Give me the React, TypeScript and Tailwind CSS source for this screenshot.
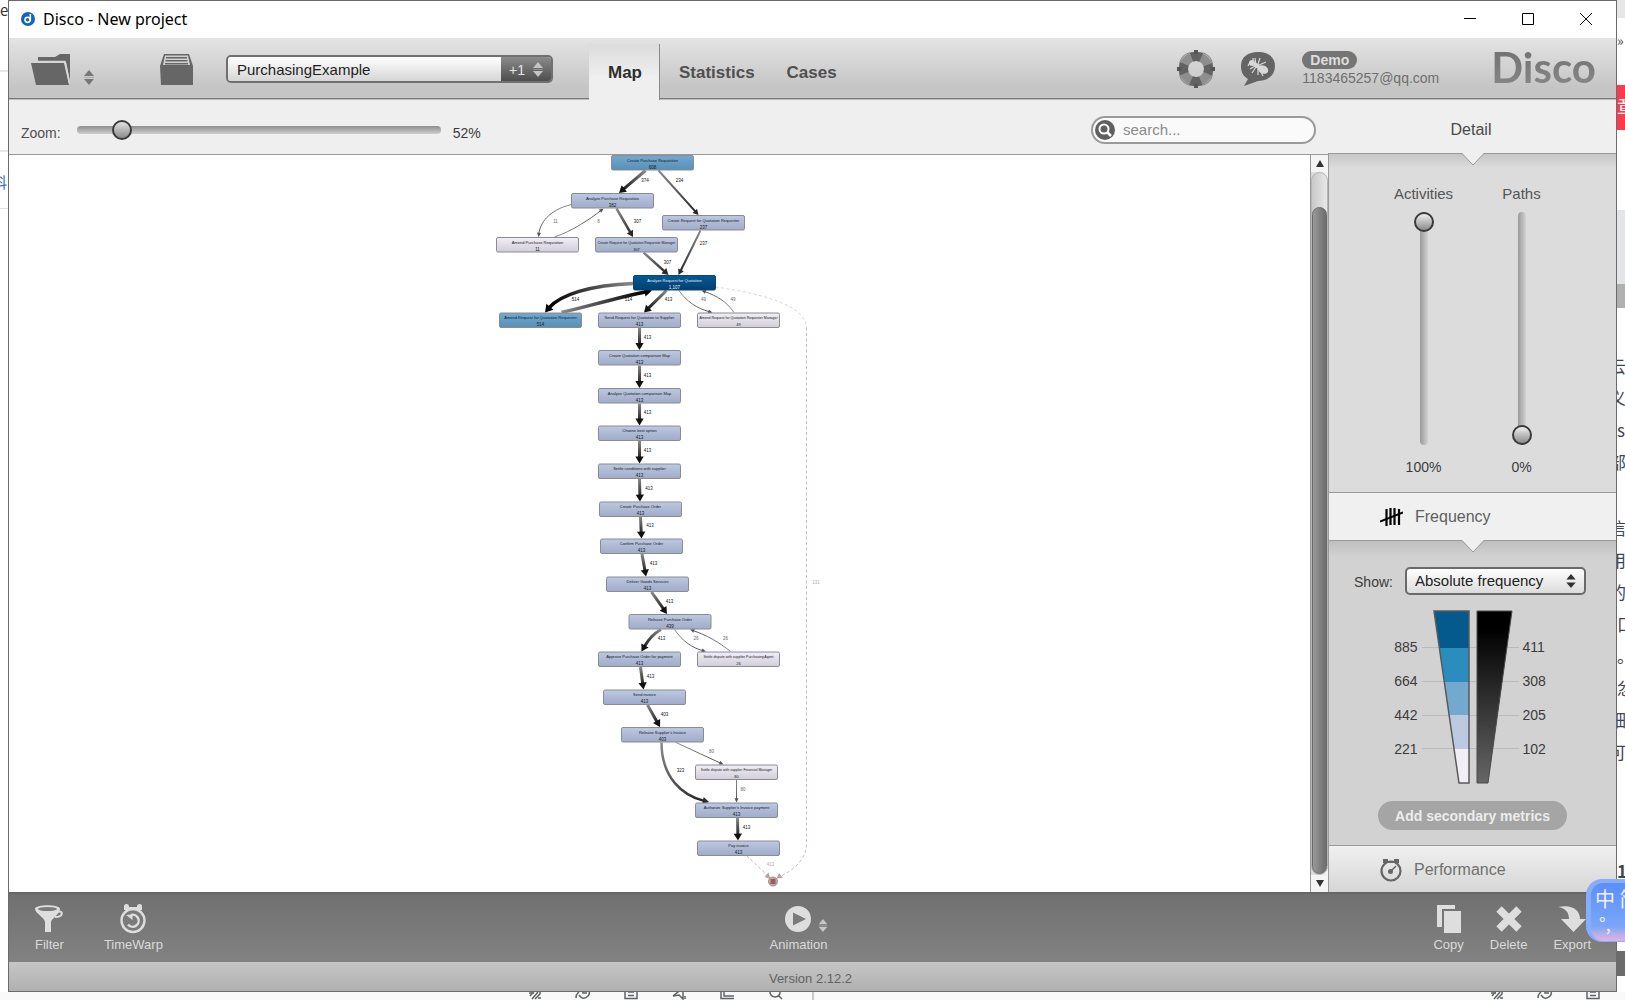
import { useState } from "react";
import type { ReactNode } from "react";

/* ---------- process map data (units: half a pixel at 52% zoom) ---------- */

type Tone = "dark" | "blue" | "mid" | "pale";
type MapNode = { x: number; y: number; name: string; count: string; tone: Tone; small?: boolean };
type MapEdge = { p: number[]; w: number; label?: string; lx?: number; ly?: number; from?: string; to?: string };

const nodes: MapNode[] = [
  { x: 1305, y: 310, name: "Create Purchase Requisition", count: "608", tone: "blue" },
  { x: 1225, y: 386, name: "Analyze Purchase Requisition", count: "382", tone: "mid" },
  { x: 1407, y: 430, name: "Create Request for Quotation Requester", count: "237", tone: "mid" },
  { x: 1075, y: 474, name: "Amend Purchase Requisition", count: "11", tone: "pale" },
  { x: 1273, y: 474, name: "Create Request for Quotation Requester Manager", count: "307", tone: "mid", small: true },
  { x: 1349, y: 550, name: "Analyze Request for Quotation", count: "1,107", tone: "dark" },
  { x: 1081, y: 625, name: "Amend Request for Quotation Requester", count: "514", tone: "blue" },
  { x: 1279, y: 625, name: "Send Request for Quotation to Supplier", count: "413", tone: "mid" },
  { x: 1477, y: 625, name: "Amend Request for Quotation Requester Manager", count: "49", tone: "pale", small: true },
  { x: 1279, y: 700, name: "Create Quotation comparison Map", count: "413", tone: "mid" },
  { x: 1279, y: 776, name: "Analyze Quotation comparison Map", count: "413", tone: "mid" },
  { x: 1279, y: 851, name: "Choose best option", count: "413", tone: "mid" },
  { x: 1279, y: 927, name: "Settle conditions with supplier", count: "413", tone: "mid" },
  { x: 1281, y: 1003, name: "Create Purchase Order", count: "413", tone: "mid" },
  { x: 1283, y: 1077, name: "Confirm Purchase Order", count: "413", tone: "mid" },
  { x: 1295, y: 1153, name: "Deliver Goods Services", count: "413", tone: "mid" },
  { x: 1340, y: 1228, name: "Release Purchase Order", count: "439", tone: "mid" },
  { x: 1279, y: 1303, name: "Approve Purchase Order for payment", count: "413", tone: "mid" },
  { x: 1477, y: 1303, name: "Settle dispute with supplier Purchasing Agent", count: "26", tone: "pale", small: true },
  { x: 1289, y: 1379, name: "Send invoice", count: "413", tone: "mid" },
  { x: 1325, y: 1454, name: "Release Supplier's Invoice", count: "403", tone: "mid" },
  { x: 1473, y: 1529, name: "Settle dispute with supplier Financial Manager", count: "80", tone: "pale", small: true },
  { x: 1473, y: 1605, name: "Authorize Supplier's Invoice payment", count: "413", tone: "mid" },
  { x: 1477, y: 1681, name: "Pay invoice", count: "413", tone: "mid" },
];

const edges: MapEdge[] = [
  { p: [1291, 341, 1238, 386], w: 6, label: "374", lx: 1290, ly: 364 },
  { p: [1317, 341, 1397, 430], w: 4, label: "234", lx: 1359, ly: 364 },
  { p: [1143, 409, 1096, 420, 1080, 448, 1077, 474], w: 2, label: "11", lx: 1111, ly: 446 },
  { p: [1109, 474, 1145, 462, 1180, 438, 1207, 417], w: 2, label: "8", lx: 1197, ly: 446 },
  { p: [1233, 417, 1266, 474], w: 5, label: "307", lx: 1275, ly: 446 },
  { p: [1401, 461, 1357, 550], w: 4, label: "237", lx: 1407, ly: 490 },
  { p: [1287, 505, 1337, 550], w: 5, label: "307", lx: 1335, ly: 528 },
  { p: [1267, 567, 1180, 570, 1120, 590, 1090, 625], w: 7, label: "514", lx: 1151, ly: 602, to: "#000" },
  { p: [1123, 625, 1170, 614, 1240, 594, 1304, 581], w: 7, label: "514", lx: 1257, ly: 602, to: "#000" },
  { p: [1333, 581, 1288, 625], w: 6, label: "413", lx: 1337, ly: 602 },
  { p: [1358, 581, 1372, 602, 1394, 617, 1425, 625], w: 2, label: "49", lx: 1407, ly: 602 },
  { p: [1468, 625, 1452, 602, 1434, 592, 1403, 581], w: 2, label: "49", lx: 1466, ly: 602 },
  { p: [1279, 656, 1279, 700], w: 6, label: "413", lx: 1295, ly: 677 },
  { p: [1279, 731, 1279, 776], w: 6, label: "413", lx: 1295, ly: 753 },
  { p: [1279, 807, 1279, 851], w: 6, label: "413", lx: 1295, ly: 828 },
  { p: [1279, 882, 1279, 927], w: 6, label: "413", lx: 1295, ly: 904 },
  { p: [1279, 958, 1280, 1003], w: 6, label: "413", lx: 1298, ly: 980 },
  { p: [1281, 1034, 1283, 1077], w: 6, label: "413", lx: 1300, ly: 1054 },
  { p: [1284, 1108, 1292, 1153], w: 6, label: "413", lx: 1307, ly: 1130 },
  { p: [1303, 1184, 1334, 1228], w: 6, label: "413", lx: 1339, ly: 1205 },
  { p: [1322, 1259, 1306, 1268, 1294, 1284, 1283, 1303], w: 6, label: "413", lx: 1323, ly: 1280 },
  { p: [1349, 1259, 1366, 1284, 1386, 1296, 1412, 1303], w: 2, label: "26", lx: 1392, ly: 1280 },
  { p: [1461, 1303, 1438, 1284, 1412, 1270, 1380, 1259], w: 2, label: "26", lx: 1451, ly: 1280 },
  { p: [1281, 1334, 1287, 1379], w: 6, label: "413", lx: 1301, ly: 1356 },
  { p: [1295, 1410, 1320, 1454], w: 6, label: "403", lx: 1329, ly: 1432 },
  { p: [1352, 1485, 1447, 1529], w: 2, label: "80", lx: 1423, ly: 1506 },
  { p: [1323, 1485, 1323, 1556, 1366, 1592, 1418, 1604], w: 5, label: "323", lx: 1361, ly: 1544 },
  { p: [1473, 1560, 1473, 1605], w: 2, label: "80", lx: 1486, ly: 1582 },
  { p: [1475, 1636, 1476, 1681], w: 6, label: "413", lx: 1493, ly: 1658 },
];

function Edge({ edge, id }: { edge: MapEdge; id: string }) {
  const { p, w, from = "#8a8a8a" } = edge;
  const thin = w <= 2;
  const to = edge.to ?? (thin ? "#555" : w < 6 ? "#2a2a2a" : "#111");
  const n = p.length;
  const ex = p[n - 2];
  const ey = p[n - 1];
  const angle = Math.atan2(ey - p[n - 3], ex - p[n - 4]);
  const head = 6 + w * 1.3;
  const half = 2 + w * 1.05;
  const bx = ex - Math.cos(angle) * head * 0.8;
  const by = ey - Math.sin(angle) * head * 0.8;
  const d =
    n === 4
      ? `M${p[0]} ${p[1]}L${bx} ${by}`
      : `M${p[0]} ${p[1]}C${p[2]} ${p[3]} ${p[4]} ${p[5]} ${bx} ${by}`;
  const hx = ex - Math.cos(angle) * head;
  const hy = ey - Math.sin(angle) * head;
  const sx = Math.sin(angle) * half;
  const sy = Math.cos(angle) * half;
  return (
    <g>
      <linearGradient id={id} gradientUnits="userSpaceOnUse" x1={p[0]} y1={p[1]} x2={ex} y2={ey}>
        <stop offset="0" stopColor={from} />
        <stop offset="0.9" stopColor={to} />
      </linearGradient>
      <path d={d} fill="none" stroke={`url(#${id})`} strokeWidth={w} />
      <path d={`M${ex} ${ey}L${hx - sx} ${hy + sy}L${hx + sx} ${hy - sy}Z`} fill={to} />
      {edge.label && (
        <text x={edge.lx} y={edge.ly} fontSize="9" textAnchor="middle" fill={thin ? "#666" : "#111"}>
          {edge.label}
        </text>
      )}
    </g>
  );
}

function ProcessMap() {
  return (
    <svg
      viewBox="960 310 718 1474"
      className="h-[737px] w-[359px] shrink-0"
      fontFamily="'Liberation Sans', Arial, sans-serif"
      role="img"
      aria-label="Process map"
    >
      <defs>
        <linearGradient id="tone-dark" x2="0" y2="1"><stop stopColor="#045a94" /><stop offset="1" stopColor="#023f72" /></linearGradient>
        <linearGradient id="tone-blue" x2="0" y2="1"><stop stopColor="#74a9cf" /><stop offset="1" stopColor="#578fb8" /></linearGradient>
        <linearGradient id="tone-mid" x2="0" y2="1"><stop stopColor="#bdc9e1" /><stop offset="1" stopColor="#9fabc8" /></linearGradient>
        <linearGradient id="tone-pale" x2="0" y2="1"><stop stopColor="#f1eef6" /><stop offset="1" stopColor="#d2ced8" /></linearGradient>
      </defs>

      <g fill="none" stroke="#dfd3d5" strokeWidth="2" strokeDasharray="6 5">
        <path d="M1431 574C1530 588 1611 612 1613 655" />
        <path d="M1613 655V1690C1612 1720 1585 1742 1556 1755" stroke="#cdb9bc" />
        <path d="M1493 1711L1538 1754" stroke="#c5b3b3" />
      </g>
      <g fill="#b9a3a3">
        <path d="M1541 1758L1529 1754L1537 1745Z" />
        <path d="M1553 1757L1558 1746L1566 1756Z" />
      </g>
      <g fill="#b3a6a6" fontSize="9" textAnchor="middle">
        <text x="1632" y="1168">131</text>
        <text x="1541" y="1732">413</text>
      </g>

      {edges.map((e, i) => (
        <Edge key={i} edge={e} id={`edge-${i}`} />
      ))}

      {nodes.map((n) => (
        <g key={n.name} textAnchor="middle" fill={n.tone === "dark" ? "#e6eef6" : "#141922"}>
          <rect
            x={n.x - 82}
            y={n.y + 1}
            width="164"
            height="29"
            rx="3"
            fill={`url(#tone-${n.tone})`}
            stroke={n.tone === "dark" ? "#0a4675" : "#8a8c94"}
            strokeWidth="2"
          />
          <text x={n.x} y={n.y + 13} fontSize={n.small ? 7 : 8}>{n.name}</text>
          <text x={n.x} y={n.y + 27} fontSize={n.small ? 8 : 9}>{n.count}</text>
        </g>
      ))}

      <circle cx="1546" cy="1763" r="9" fill="#cfa3a3" stroke="#a58c8c" strokeWidth="2" />
      <rect x="1541" y="1758" width="10" height="10" fill="#8d6262" />
    </svg>
  );
}

/* ---------- small drawings ---------- */

function Stepper({ className, gap = true }: { className: string; gap?: boolean }) {
  return (
    <svg viewBox="0 0 10 15" className={className} fill="currentColor" aria-hidden="true">
      <path d="M5 0L10 6H0Z" />
      <path d="M0 9H10L5 15Z" />
      {gap && <path d="M0 7H10V8H0Z" opacity="0.35" />}
    </svg>
  );
}

function DiscoMark() {
  return (
    <svg viewBox="0 0 14 14" className="size-[14px]" aria-hidden="true">
      <circle cx="7" cy="7" r="7" fill="#1266bd" />
      <circle cx="6.6" cy="7.8" r="2.6" fill="none" stroke="#fff" strokeWidth="1.6" />
      <path d="M9.3 2V8.5" stroke="#fff" strokeWidth="1.6" />
    </svg>
  );
}

function FolderIcon() {
  return (
    <svg viewBox="0 0 40 31" className="h-[31px] w-10" fill="#666" aria-hidden="true">
      <path d="M7 3H24L29 0H39V27L35 8L33 7H7Z" />
      <path d="M0 9H33L38 31H5Z" />
      <path d="M7 7.500H34L38.500 29" stroke="#d8d8d8" strokeWidth="1.500" fill="none" />
    </svg>
  );
}

function ArchiveIcon() {
  return (
    <svg viewBox="0 0 33 31" className="h-[31px] w-[33px]" fill="#666" aria-hidden="true">
      <path d="M4 0H29L33 12V31H1L0 12Z" />
      <path d="M5 1.500H28L30 11H3Z" fill="#d2d2d2" />
      <path d="M6 3H27V4.500H6ZM5.500 6H27.500V7.500H5.500ZM5 9H28V10.500H5Z" />
    </svg>
  );
}

function LifebuoyIcon() {
  return (
    <svg viewBox="0 0 38 38" className="size-[38px]" fill="none" aria-hidden="true">
      <rect x="2.500" y="2.500" width="33" height="33" rx="13" stroke="#8d8d8d" strokeWidth="1.200" />
      <circle cx="19" cy="19" r="12.500" stroke="#8e8e8e" strokeWidth="9" />
      <circle cx="19" cy="19" r="12.500" stroke="#626262" strokeWidth="9" strokeDasharray="9.800 9.835" strokeDashoffset="4.900" />
      <path d="M17 0H21V4H17ZM17 34H21V38H17ZM0 17H4V21H0ZM34 17H38V21H34Z" fill="#555" />
    </svg>
  );
}

function BugBubbleIcon() {
  return (
    <svg viewBox="0 0 34 34" className="size-[34px]" aria-hidden="true">
      <path d="M17 0C27 0 34 5 34 14C34 23 27 29 17 29L3 34L7 27C2 24 0 20 0 14C0 5 7 0 17 0Z" fill="#646464" />
      <g fill="#d9d9d9">
        <circle cx="11" cy="11" r="3" />
        <ellipse cx="15.500" cy="13.500" rx="3" ry="2.200" transform="rotate(30 15.500 13.500)" />
        <ellipse cx="22" cy="17.500" rx="5.500" ry="4" transform="rotate(25 22 17.500)" />
      </g>
      <path d="M9 10L7 14M12 9L12 6M15 13L14 6M17 12L19 6M18 13L25 10M14 14L9 17M15 15L11 21M17 16L17 23M19 18L22 24" stroke="#d9d9d9" strokeWidth="1.200" fill="none" />
    </svg>
  );
}

function TallyIcon() {
  return (
    <svg viewBox="0 0 23 18" className="h-[18px] w-[23px]" fill="none" stroke="#000" aria-hidden="true">
      <path d="M6.500 1V18M10.500 0V17M14.500 0V17M19 1V17" strokeWidth="2.200" />
      <path d="M0 13.500L23 4.500" strokeWidth="2" />
    </svg>
  );
}

function ClockIcon() {
  return (
    <svg viewBox="0 0 22 24" className="h-6 w-[22px]" aria-hidden="true">
      <path d="M3 1H8V3H14V1H19V5H3Z" fill="#666" />
      <circle cx="11" cy="13" r="9.500" fill="none" stroke="#666" strokeWidth="2.200" />
      <circle cx="10.500" cy="13.500" r="2.500" fill="#666" />
      <path d="M10.500 13.500L16 8" stroke="#666" strokeWidth="1.500" />
    </svg>
  );
}

function FunnelIcon() {
  return (
    <svg viewBox="0 0 28 28" className="size-7" aria-hidden="true">
      <path d="M0 4C0 -1 25 -1 25 4C25 9 16 14 16 17V27H10V17C10 13 0 8 0 4Z" fill="#dedede" />
      <ellipse cx="12.500" cy="4" rx="9.500" ry="2" fill="#7a7a7a" />
      <path d="M23 6.500C28 5.500 29 12 20 12" fill="none" stroke="#dedede" strokeWidth="2" />
    </svg>
  );
}

function TimeWarpIcon() {
  return (
    <svg viewBox="0 0 26 30" className="h-[30px] w-[26px]" fill="none" stroke="#dedede" aria-hidden="true">
      <path d="M4 6V2Q4 0 6.500 0Q9 0 9 3H17Q17 0 19.500 0Q22 0 22 2V6Z" fill="#dedede" stroke="none" />
      <circle cx="13" cy="16.500" r="12" fill="#7b7b7b" stroke="none" />
      <circle cx="13" cy="16.500" r="11.500" strokeWidth="2.400" />
      <path d="M11 11A6 6 0 1 1 8 20.500" strokeWidth="2.400" />
      <path d="M6 11L12.500 10.500V16Z" fill="#dedede" stroke="none" />
    </svg>
  );
}

function PlayIcon() {
  return (
    <svg viewBox="0 0 26 26" className="size-[26px]" aria-hidden="true">
      <circle cx="13" cy="13" r="13" fill="#dedede" />
      <path d="M8 6.500L21 13L8 19.500Z" fill="#7a7a7a" />
    </svg>
  );
}

function CopyIcon() {
  return (
    <svg viewBox="0 0 24 28" className="h-7 w-6" fill="#dedede" aria-hidden="true">
      <path d="M0 0H18V4H5V22H0Z" />
      <path d="M7 6H24V28H7Z" />
    </svg>
  );
}

function DeleteIcon() {
  return (
    <svg viewBox="0 0 26 26" className="size-[26px]" aria-hidden="true">
      <path d="M3 3L23 23M23 3L3 23" stroke="#dedede" strokeWidth="7.500" />
    </svg>
  );
}

function ExportIcon() {
  return (
    <svg viewBox="0 0 28 26" className="h-[26px] w-7" aria-hidden="true">
      <path d="M0 1C13 -2 22 3 22 13H28L15.500 26L3 13H11C11 7 8 2 0 1Z" fill="#dedede" />
    </svg>
  );
}

/* ---------- controls ---------- */

const horizontalSlider =
  "h-5 appearance-none bg-transparent [&::-webkit-slider-runnable-track]:h-2 [&::-webkit-slider-runnable-track]:rounded-full [&::-webkit-slider-runnable-track]:bg-linear-to-b [&::-webkit-slider-runnable-track]:from-[#8e8e8e] [&::-webkit-slider-runnable-track]:to-[#cfcfcf] [&::-webkit-slider-thumb]:-mt-[6px] [&::-webkit-slider-thumb]:size-5 [&::-webkit-slider-thumb]:appearance-none [&::-webkit-slider-thumb]:rounded-full [&::-webkit-slider-thumb]:border-2 [&::-webkit-slider-thumb]:border-[#3a3a3a] [&::-webkit-slider-thumb]:bg-linear-to-b [&::-webkit-slider-thumb]:from-[#e2e2e2] [&::-webkit-slider-thumb]:to-[#8c8c8c]";

const verticalSlider =
  "h-[233px] w-5 appearance-none bg-transparent [direction:rtl] [writing-mode:vertical-lr] [&::-webkit-slider-runnable-track]:w-2 [&::-webkit-slider-runnable-track]:rounded-full [&::-webkit-slider-runnable-track]:bg-linear-to-r [&::-webkit-slider-runnable-track]:from-[#9a9a9a] [&::-webkit-slider-runnable-track]:to-[#d2d2d2] [&::-webkit-slider-thumb]:-ml-[6px] [&::-webkit-slider-thumb]:size-5 [&::-webkit-slider-thumb]:appearance-none [&::-webkit-slider-thumb]:rounded-full [&::-webkit-slider-thumb]:border-2 [&::-webkit-slider-thumb]:border-[#3a3a3a] [&::-webkit-slider-thumb]:bg-linear-to-b [&::-webkit-slider-thumb]:from-[#f0f0f0] [&::-webkit-slider-thumb]:to-[#8c8c8c]";

function DetailSlider({ id, label, initial }: { id: string; label: string; initial: number }) {
  const [value, setValue] = useState(initial);
  return (
    <div className="flex w-[98px] flex-col items-center">
      <label htmlFor={id} className="text-[15px] leading-5 text-[#555]">{label}</label>
      <input id={id} type="range" min="0" max="100" value={value} onChange={(e) => setValue(Number(e.target.value))} className={`mt-2 ${verticalSlider}`} />
      <output htmlFor={id} className="mt-3 text-sm text-[#3c3c3c]">{value}%</output>
    </div>
  );
}

function Notch({ fill }: { fill: string }) {
  return (
    <svg viewBox="0 0 24 13" className="absolute -top-px left-1/2 h-[13px] w-6 -translate-x-1/2" aria-hidden="true">
      <path d="M1 0H23L12 12Z" fill={fill} />
      <path d="M1 0.500L12 12L23 0.500" fill="none" stroke="#9a9a9a" />
    </svg>
  );
}

function Tool({ icon, label }: { icon: ReactNode; label: string }) {
  return (
    <button type="button" className="flex flex-col items-center text-[13px] leading-4 text-[#dadada]">
      <span className="flex h-[30px] items-center">{icon}</span>
      <span className="mt-[3px]">{label}</span>
    </button>
  );
}

/* ---------- window sections ---------- */

function TitleBar() {
  return (
    <div className="flex h-[37px] shrink-0 items-center bg-white pr-6 pb-0.5 pl-3 text-black">
      <DiscoMark />
      <h1 className="ml-2 font-['Noto_Sans','Open_Sans',sans-serif] text-base leading-5">Disco - New project</h1>
      <div className="ml-auto flex items-center gap-[46px]">
        <button type="button" aria-label="Minimize">
          <svg viewBox="0 0 12 12" className="size-3"><path d="M0 5.500H12" stroke="#000" /></svg>
        </button>
        <button type="button" aria-label="Maximize">
          <svg viewBox="0 0 12 12" className="size-3"><path d="M0.500 0.500H11.500V11.500H0.500Z" fill="none" stroke="#000" /></svg>
        </button>
        <button type="button" aria-label="Close">
          <svg viewBox="0 0 12 12" className="size-3"><path d="M0 0L12 12M12 0L0 12" stroke="#000" /></svg>
        </button>
      </div>
    </div>
  );
}

function Header() {
  return (
    <header className="flex h-[62px] shrink-0 bg-linear-to-b from-[#e4e4e4] to-[#c5c5c5] to-80% shadow-[inset_0_-1px_0_#bdbdbd,inset_0_-2px_0_#7b7b7b]">
      <div className="flex items-center pl-[22px]">
        <button type="button" aria-label="Open" className="flex items-end">
          <FolderIcon />
          <Stepper className="ml-[13px] h-[15px] w-[10px] text-[#777]" />
        </button>
        <button type="button" aria-label="Project archive" className="ml-[66px]"><ArchiveIcon /></button>
        <button type="button" className="ml-[33px] flex h-7 w-[327px] items-stretch overflow-hidden rounded-[5px] border-2 border-[#707070] text-left">
          <span className="flex-1 bg-linear-to-b from-white to-[#d6d6d6] pt-px pl-[9px] text-[15px] leading-6 text-[#1e1e1e]">PurchasingExample</span>
          <span className="flex w-[50px] items-center justify-center gap-2 bg-linear-to-b from-[#8c8c8c] to-[#4e4e4e] pt-px text-sm text-[#e4e4e4]">
            +1
            <Stepper className="h-[15px] w-[10px] text-[#c4c4c4]" />
          </span>
        </button>
      </div>
      <nav className="ml-9 flex text-[17px] font-bold text-[#505050]">
        <button type="button" className="mt-1.5 w-[71px] border-r border-[#8a8a8a] bg-linear-to-b from-[#dcdcdc] to-[#efefef] to-60% pt-px pl-0.5 text-[#2e2e2e]">Map</button>
        <button type="button" className="mt-1.5 ml-[19px] pt-px">Statistics</button>
        <button type="button" className="mt-1.5 ml-8 pt-px">Cases</button>
      </nav>
      <div className="ml-auto flex items-center pr-5">
        <button type="button" aria-label="Help"><LifebuoyIcon /></button>
        <button type="button" aria-label="Report a bug" className="ml-[26px]"><BugBubbleIcon /></button>
        <div className="ml-[27px] flex flex-col items-start text-[#6f6f6f]">
          <span className="h-[18px] rounded-full bg-[#757575] px-2 text-sm leading-[18px] font-bold text-[#dedede]">Demo</span>
          <span className="text-sm leading-[18px]">1183465257@qq.com</span>
        </div>
        <span className="ml-[52px] bg-linear-to-b from-[#6e6e6e] to-[#8c8c8c] bg-clip-text pb-1 font-['Lato',sans-serif] text-[42px] leading-[48px] font-bold text-transparent">Disco</span>
      </div>
    </header>
  );
}

function Toolbar() {
  const [zoom, setZoom] = useState(52);
  return (
    <div className="flex h-[53px] shrink-0 items-center bg-[#efefef]">
      <div className="flex flex-1 items-center pt-1.5 pr-3 pl-3 text-[#505050]">
        <label htmlFor="zoom" className="pt-1.5 text-sm">Zoom:</label>
        <input
          id="zoom"
          type="range"
          min="41"
          max="147"
          value={zoom}
          onChange={(e) => setZoom(Number(e.target.value))}
          className={`ml-4 w-[364px] ${horizontalSlider}`}
        />
        <output htmlFor="zoom" className="ml-3 pt-1.5 text-sm text-[#3c3c3c]">{zoom}%</output>
        <div className="ml-auto flex h-7 w-[225px] items-center gap-2 rounded-full border-2 border-[#9a9a9a] bg-[#fafafa] pl-0.5">
          <svg viewBox="0 0 20 20" className="size-5 shrink-0" aria-hidden="true">
            <circle cx="10" cy="10" r="10" fill="#606060" />
            <circle cx="9" cy="9" r="4.500" fill="none" stroke="#fff" strokeWidth="2" />
            <path d="M12 12L16 16" stroke="#fff" strokeWidth="2.500" />
          </svg>
          <input type="search" aria-label="Search" placeholder="search..." className="w-full min-w-0 bg-transparent pr-4 text-[15px] leading-5 outline-none placeholder:text-[#8a8a8a]" />
        </div>
      </div>
      <h2 className="w-72 pt-1.5 pr-0.5 text-center text-base text-[#4a4a4a]">Detail</h2>
    </div>
  );
}

function ScrollBar() {
  return (
    <div className="flex w-[18px] shrink-0 flex-col border-l border-[#9a9a9a] bg-linear-to-r from-[#d8d8d8] to-[#f6f6f6]">
      <button type="button" aria-label="Scroll up" className="flex h-[17px] items-center justify-center bg-[#f4f4f4]">
        <svg viewBox="0 0 8 7" className="h-[7px] w-2"><path d="M4 0L8 7H0Z" fill="#333" /></svg>
      </button>
      <div className="flex flex-1 flex-col rounded-full border border-[#b5b5b5] bg-linear-to-r from-[#c9c9c9] to-[#e8e8e8] pt-[34px]">
        <div className="flex-1 rounded-full border border-[#6a6a6a] bg-linear-to-r from-[#9a9a9a] to-[#6c6c6c]" />
      </div>
      <button type="button" aria-label="Scroll down" className="flex h-[17px] items-center justify-center bg-[#f4f4f4]">
        <svg viewBox="0 0 8 7" className="h-[7px] w-2"><path d="M0 0H8L4 7Z" fill="#333" /></svg>
      </button>
    </div>
  );
}

function Legend() {
  return (
    <div className="flex justify-center text-sm leading-[34px] text-[#3c3c3c]">
      <ul className="mt-5 text-right">
        <li>885</li><li>664</li><li>442</li><li>221</li>
      </ul>
      <svg viewBox="0 0 97 174" className="mx-1 h-[174px] w-[97px]" aria-hidden="true">
        <defs>
          <clipPath id="wedge"><path d="M12 1H47V173H37Z" /></clipPath>
          <linearGradient id="paths" x2="0" y2="1"><stop offset="0.1" stopColor="#000" /><stop offset="1" stopColor="#666" /></linearGradient>
        </defs>
        <path d="M0 37.500H97M0 71.500H97M0 105.500H97M0 138.500H97" stroke="#bababa" />
        <g clipPath="url(#wedge)">
          <path d="M0 0H50V38H0Z" fill="#045a8d" />
          <path d="M0 38H50V72H0Z" fill="#2b8cbe" />
          <path d="M0 72H50V105H0Z" fill="#74a9cf" />
          <path d="M0 105H50V139H0Z" fill="#bdc9e1" />
          <path d="M0 139H50V174H0Z" fill="#f1eef6" />
        </g>
        <path d="M12 1H47V173H37Z" fill="none" stroke="#5a5a5a" strokeWidth="1.500" />
        <path d="M55 1H90L66 173H55Z" fill="url(#paths)" stroke="#4a4a4a" />
      </svg>
      <ul className="mt-5">
        <li>411</li><li>308</li><li>205</li><li>102</li>
      </ul>
    </div>
  );
}

function SidePanel() {
  return (
    <aside className="flex w-72 shrink-0 flex-col border-l border-[#9a9a9a]">
      <section className="relative flex h-[339px] justify-center border-t border-[#9a9a9a] bg-[#dcdcdc] bg-linear-to-b from-[#c6c6c6] to-[#dcdcdc] to-[14px] pt-[30px]">
        <Notch fill="#efefef" />
        <DetailSlider id="activities" label="Activities" initial={100} />
        <DetailSlider id="paths-detail" label="Paths" initial={0} />
      </section>
      <button type="button" className="flex h-12 items-center gap-3 border-t border-[#9a9a9a] bg-[#f0f0f0] pt-px pl-[51px] text-base text-[#606060]">
        <TallyIcon />
        Frequency
      </button>
      <section className="relative flex flex-1 flex-col items-center border-t border-[#9a9a9a] bg-[#d2d2d2] bg-linear-to-b from-[#bfbfbf] to-[#d2d2d2] to-[16px] pt-[26px]">
        <Notch fill="#f0f0f0" />
        <div className="flex items-center gap-3 pr-[5px]">
          <label htmlFor="metric" className="pt-0.5 text-sm text-[#3c3c3c]">Show:</label>
          <span className="relative">
            <select id="metric" className="h-7 w-[181px] appearance-none rounded-[5px] border-2 border-[#6a6a6a] bg-linear-to-b from-white to-[#dcdcdc] pl-2 text-[15px] text-[#222]">
              <option>Absolute frequency</option>
              <option>Case frequency</option>
              <option>Max. repetitions</option>
            </select>
            <Stepper gap={false} className="pointer-events-none absolute top-[7px] right-[10px] h-[14px] w-[10px] text-[#333]" />
          </span>
        </div>
        <div className="mt-[15px] pr-[5px]"><Legend /></div>
        <button type="button" className="mt-[17px] h-[29px] rounded-full bg-[#a5a5a5] px-[17px] text-sm font-bold text-[#ececec]">Add secondary metrics</button>
      </section>
      <button type="button" className="flex h-[47px] items-center gap-3 border-t border-[#9a9a9a] bg-linear-to-b from-[#f0f0f0] to-[#d6d6d6] pt-px pl-[51px] text-base text-[#707070]">
        <ClockIcon />
        Performance
      </button>
    </aside>
  );
}

function Footer() {
  return (
    <footer className="shrink-0">
      <div className="grid h-[70px] grid-cols-[1fr_auto_1fr] items-start border-t-2 border-[#666] bg-linear-to-b from-[#707070] to-[#828282] pt-2.5">
        <div className="flex gap-10 pl-[26px]">
          <Tool icon={<FunnelIcon />} label="Filter" />
          <Tool icon={<TimeWarpIcon />} label="TimeWarp" />
        </div>
        <div className="-ml-7">
          <Tool
            icon={<span className="flex items-end gap-[7px] pl-4"><PlayIcon /><Stepper className="h-[13px] w-[10px] text-[#c6c6c6]" /></span>}
            label="Animation"
          />
        </div>
        <div className="flex justify-end gap-[26px] pr-[25px]">
          <Tool icon={<CopyIcon />} label="Copy" />
          <Tool icon={<DeleteIcon />} label="Delete" />
          <Tool icon={<ExportIcon />} label="Export" />
        </div>
      </div>
      <p className="h-[29px] bg-linear-to-b from-[#c6c6c6] to-[#b0b0b0] pr-1 text-center text-[13px] leading-[33px] text-[#636363]">Version 2.12.2</p>
    </footer>
  );
}

/* ---------- what shows behind the window ---------- */

function BackIcon({ d }: { d: string }) {
  return (
    <svg viewBox="0 0 16 16" className="size-4 shrink-0" fill="none" stroke="#5f6368" strokeWidth="1.500" aria-hidden="true">
      <path d={d} />
    </svg>
  );
}

const wing = "M3 12L9 5M5 15L11 8M2 9L7 9M13 5V10L8 15M11 14H14";
const gauge = "M1 14Q1 10 4 8M4 11Q8 17 13 12Q15 10 14 7M8 5V9H12";
const bin = "M2 3H14V14.500H2ZM5 8H11M5 11.500H11";
const horn = "M2 12L12 4V15L8 11L2 12M14 12V15";
const sheet = "M5 2V12H15M2 5V14.500H15";
const lens = "M8 3A5 5 0 1 0 8.100 3M11 11L15 15";

function LeftStrip() {
  return (
    <div className="flex w-2 shrink-0 flex-col overflow-hidden bg-white font-['Noto_Sans_CJK_SC',sans-serif] text-[15px] leading-5 whitespace-nowrap">
      <span className="h-[70px] text-[#333]">ea</span>
      <span className="h-[82px] border-y-2 border-[#e4e8ec]" />
      <span className="mt-5 -ml-2 text-[#2f6ad0]">科</span>
      <span className="mt-4 border-t border-[#e2e2e2]" />
    </div>
  );
}

function RightStrip() {
  return (
    <div className="flex w-2 shrink-0 flex-col overflow-hidden bg-white font-['Noto_Sans_CJK_SC',sans-serif] text-[17px] leading-6 whitespace-nowrap text-[#3f4450]">
      <span className="h-[18px] bg-[#e6e6e6]" />
      <span className="mt-3 h-6 text-sm">»</span>
      <span className="mt-[31px] h-[45px] bg-[#fc3a4e] pt-2 text-xl text-white">章</span>
      <span className="mt-20 h-[74px] bg-[#e3e5e9]" />
      <span className="h-6 bg-[#b0b0b0]" />
      <span className="mt-[46px] -ml-2 h-8">云</span>
      <span className="-ml-2 h-8">义</span>
      <span className="h-8">se</span>
      <span className="-ml-2 h-[66px]">部</span>
      <span className="-ml-2 h-8">信</span>
      <span className="-ml-2 h-8">用</span>
      <span className="-ml-2 h-8">的</span>
      <span className="h-8">口</span>
      <span className="h-8">。</span>
      <span className="h-8">忿</span>
      <span className="-ml-2 h-8">细</span>
      <span className="-ml-2 h-[119px]">可</span>
      <span className="h-6 font-bold">1</span>
      <span className="mt-auto mb-4 h-[25px] bg-[#6b6b6b]" />
    </div>
  );
}

export default function App() {
  return (
    <div className="relative flex min-h-screen flex-col overflow-hidden bg-[#f9f9f9] font-['Liberation_Sans',Arial,sans-serif]">
      <div className="flex flex-1">
        <LeftStrip />
        <main className="flex min-w-0 flex-1 flex-col border border-[#6b6b6b]">
          <TitleBar />
          <Header />
          <Toolbar />
          <div className="flex min-h-0 flex-1 bg-[#efefef]">
            <div className="mt-px flex min-w-0 flex-1 border-t border-[#9a9a9a] bg-white">
              <div className="flex min-w-0 flex-1 justify-center overflow-hidden"><ProcessMap /></div>
              <ScrollBar />
            </div>
            <SidePanel />
          </div>
          <Footer />
        </main>
        <RightStrip />
      </div>
      <div className="flex h-2 items-end overflow-hidden pr-6 pl-[527px]">
        <div className="flex h-2 items-end gap-8 overflow-hidden">
          <BackIcon d={wing} />
          <BackIcon d={gauge} />
          <BackIcon d={bin} />
          <BackIcon d={horn} />
          <BackIcon d={sheet} />
          <BackIcon d={lens} />
        </div>
        <div className="ml-[29px] h-2 w-0.5 bg-[#c8c8c8]" />
        <div className="ml-auto flex h-2 items-end gap-8 overflow-hidden">
          <BackIcon d={wing} />
          <BackIcon d={gauge} />
          <BackIcon d={bin} />
        </div>
      </div>
      <div className="absolute right-0 bottom-[58px] h-[63px] w-[39px] overflow-hidden rounded-l-2xl bg-[#86aefb] pt-1 pl-[5px]">
        <div className="h-[58px] w-10 overflow-hidden rounded-l-xl bg-linear-to-b from-[#5a90fa] via-[#7aa6f8] via-75% to-[#e3b4dc] pt-0.5 pl-1 font-['Noto_Sans_CJK_SC',sans-serif] text-xl leading-7 whitespace-nowrap text-[#f4ecff]">
          <div>中 简</div>
          <div className="pl-1 text-lg leading-5">°,</div>
        </div>
      </div>
    </div>
  );
}
